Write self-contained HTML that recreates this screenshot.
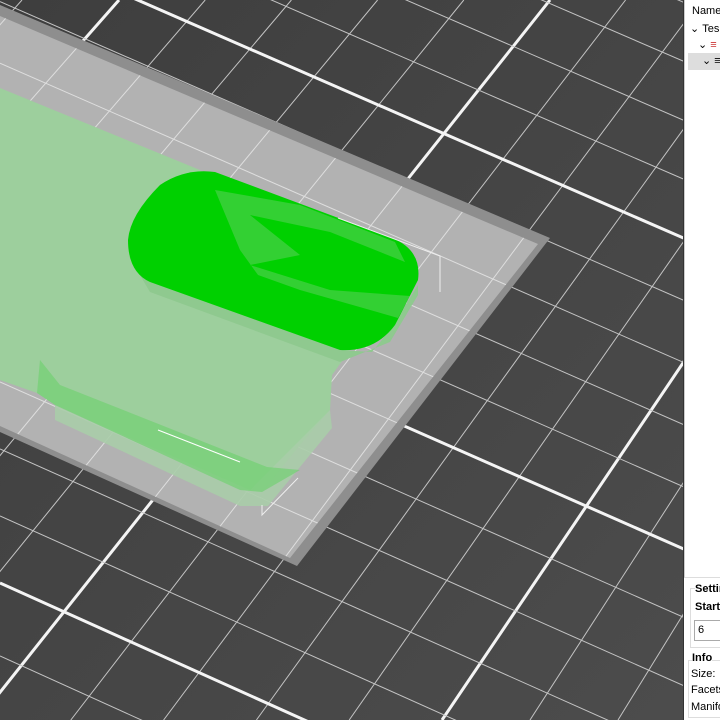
<!DOCTYPE html>
<html><head><meta charset="utf-8"><style>
html,body{margin:0;padding:0;width:720px;height:720px;overflow:hidden;background:#444;font-family:"Liberation Sans",sans-serif}
#v{position:absolute;left:0;top:0}
#p{position:absolute;left:684px;top:0;width:36px;height:720px;background:#fff;overflow:hidden;font-size:11px;color:#000}
#p div{position:absolute;white-space:nowrap}
</style></head><body>
<svg id="v" width="684" height="720" viewBox="0 0 684 720">
<defs>
<linearGradient id="bg" x1="0" y1="0" x2="1" y2="1"><stop offset="0" stop-color="#3e3e3e"/><stop offset="1" stop-color="#4c4c4c"/></linearGradient>
<clipPath id="pc"><polygon points="0,16 538,244 290,558 0,426"/></clipPath>
</defs>
<rect width="684" height="720" fill="url(#bg)"/>
<g id="grid"></g>
<polygon points="0,5 550,238 297,566 0,432" fill="#8e8e8e"/>
<polygon points="0,16 538,244 290,558 0,426" fill="#b2b2b2"/>
<g id="grid2" clip-path="url(#pc)"></g>
<!-- light green strip -->
<polygon points="0,88 200,170 350,350 332,375 330,410 300,445 262,492 240,490 55,405 37,393 0,380" fill="#9dcf9d"/>
<!-- lower object side band -->
<polygon points="55,405 250,490 330,410 332,428 268,506 240,506 55,420" fill="#a9cca9" opacity="0.9"/>
<polygon points="40,360 60,385 267,467 300,470 262,492 240,490 55,405 37,393" fill="#6ad16a" opacity="0.6"/>
<line x1="158" y1="430" x2="240" y2="462" stroke="#fff" stroke-width="1"/>
<polyline points="262,505 262,515 298,478" fill="none" stroke="#eee" stroke-width="1"/>
<!-- upper object side -->
<polygon points="128,255 150,292 340,362 390,342 418,295 418,285 390,330 372,352 340,350 150,282" fill="#8fc98f"/>
<!-- upper object -->
<path d="M128,240 Q130,215 160,185 Q185,168 215,172 L392,238 Q422,250 418,280 L395,325 Q375,352 340,350 L150,282 Q128,272 128,240 Z" fill="#00d000"/>
<polygon points="215,190 300,205 395,242 405,262 330,232 250,215 300,255 250,265 330,290 410,296 398,318 300,290 258,275 240,250" fill="#66cf66" opacity="0.5"/>
<polyline points="338,218 440,256 440,292" fill="none" stroke="#eee" stroke-width="1"/>
<line x1="684" y1="0" x2="684" y2="720" stroke="#333" stroke-width="2"/>
</svg>
<div id="p">
<div style="left:0;top:0;width:35px;height:577px;border-left:1px solid #ccc;border-bottom:1px solid #ddd"></div>
<div style="left:8px;top:5px">Name</div>
<div style="left:6px;top:22px">&#8964;&nbsp;Tes</div>
<div style="left:14px;top:38px">&#8964; <span style="color:#c33">&#8801;</span></div>
<div style="left:4px;top:53px;width:32px;height:17px;background:#ddd"></div>
<div style="left:18px;top:54px">&#8964; &#8801;</div>
<div style="left:6px;top:588px;width:40px;height:58px;border:1px solid #ddd"></div>
<div style="left:11px;top:583px;font-weight:bold;background:#fff">Settin</div>
<div style="left:11px;top:601px;font-weight:bold">Start</div>
<div style="left:10px;top:620px;width:30px;height:19px;border:1px solid #aaa"></div>
<div style="left:14px;top:624px">6</div>
<div style="left:4px;top:660px;width:40px;height:56px;border:1px solid #ddd"></div>
<div style="left:8px;top:652px;font-weight:bold;background:#fff">Info</div>
<div style="left:7px;top:668px">Size:</div>
<div style="left:7px;top:684px">Facets:</div>
<div style="left:7px;top:701px">Manifo</div>
</div>
<script>
var ns="http://www.w3.org/2000/svg";
var g=document.getElementById("grid"),g2=document.getElementById("grid2");
function ln(p,x1,y1,x2,y2,c,w){var l=document.createElementNS(ns,"line");l.setAttribute("x1",x1);l.setAttribute("y1",y1);l.setAttribute("x2",x2);l.setAttribute("y2",y2);l.setAttribute("stroke",c);l.setAttribute("stroke-width",w);p.appendChild(l);}
var S=[[-366,-1035],[119,-515],[550,-22],[928,442],[1263,882],[1560,1300]];
var L=[[-350,-41],[-60,254],[248,565],[583,907],[948,1282]];
function fam(M,steep){
 for(var i=0;i<M.length-1;i++){for(var k=0;k<5;k++){var t=k/5;
  var a=M[i][0]+(M[i+1][0]-M[i][0])*t,b=M[i][1]+(M[i+1][1]-M[i][1])*t;
  var maj=(k==0);
  if(steep){ln(g,a,0,b,720,maj?"#f4f4f4":"#c4c4c4",maj?3:1);ln(g2,a,0,b,720,"#dedede",1);}
  else{ln(g,0,a,720,b,maj?"#f4f4f4":"#c4c4c4",maj?3:1);ln(g2,0,a,720,b,"#dedede",1);}
 }}
}
fam(S,true);fam(L,false);
</script>
</body></html>
